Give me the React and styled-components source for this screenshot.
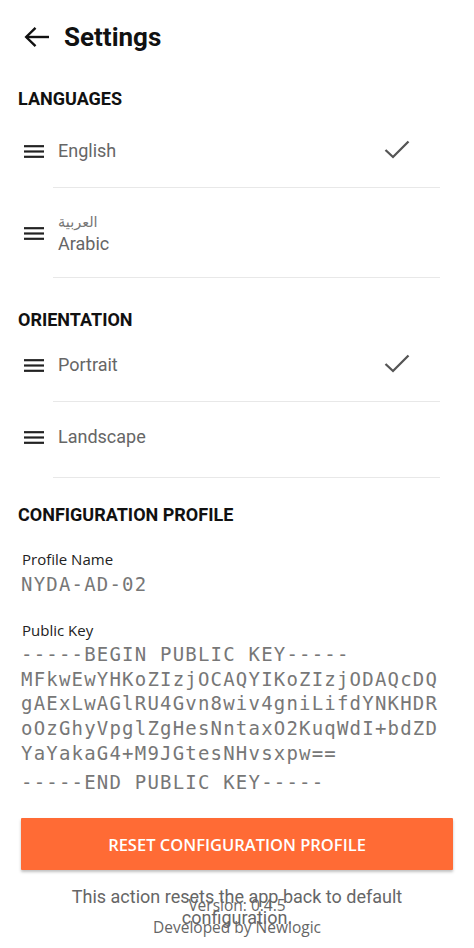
import React from "react";
import styled, { createGlobalStyle } from "styled-components";

const Global = createGlobalStyle`
  html, body { margin: 0; padding: 0; background: #fff; }
  body { font-family: Roboto, "Noto Sans", sans-serif; }
`;

const Page = styled.div`
  position: relative;
  width: 474px;
  height: 948px;
  overflow: hidden;
  background: #fff;
`;

const Header = styled.header`
  height: 74px;
  display: flex;
  align-items: center;
  gap: 13px;
  padding-left: 23px;
  box-sizing: border-box;
`;

const BackButton = styled.button`
  width: 28px;
  height: 28px;
  padding: 0;
  border: 0;
  background: none;
  display: flex;
  align-items: center;
  justify-content: center;
`;

const Title = styled.h1`
  margin: 0;
  font-family: Roboto, sans-serif;
  font-weight: 700;
  font-size: 26px;
  color: #111;
  line-height: 30px;
`;

const SectionTitle = styled.h2`
  margin: ${(p) => p.$top}px 0 0 18px;
  height: 20px;
  font-family: Roboto, sans-serif;
  font-weight: 700;
  font-size: 18px;
  line-height: 20px;
  color: #111;
`;

const List = styled.ul`
  margin: 0;
  padding: 0;
  list-style: none;
`;

const Row = styled.li`
  display: flex;
  height: ${(p) => p.$height}px;
`;

const Handle = styled.div`
  width: 53px;
  flex: none;
  display: flex;
  justify-content: flex-start;
  align-items: ${(p) => (p.$center ? "center" : "flex-start")};
  padding-left: 24px;
  padding-top: ${(p) => (p.$center ? 0 : p.$top - 6)}px;
  box-sizing: border-box;
`;

const RowBody = styled.div`
  flex: none;
  width: 387px;
  display: flex;
  align-items: ${(p) => (p.$center ? "center" : "flex-start")};
  padding-top: ${(p) => (p.$center ? 0 : p.$top - 11)}px;
  padding-left: 5px;
  padding-right: 30px;
  box-sizing: border-box;
  border-bottom: 1px solid #e8e8e8;
`;

const Labels = styled.div`
  flex: 1;
  display: flex;
  flex-direction: column;
`;

const Native = styled.span`
  align-self: flex-start;
  font-family: "DejaVu Sans", "Noto Sans", sans-serif;
  font-size: 14.5px;
  line-height: 22px;
  color: #777;
`;

const ItemText = styled.span`
  font-family: Roboto, sans-serif;
  font-size: 18px;
  line-height: 22px;
  color: #666;
`;

const Field = styled.div`
  margin: ${(p) => p.$top}px 0 0 22px;
  display: flex;
  flex-direction: column;
`;

const FieldLabel = styled.div`
  font-family: "Open Sans", sans-serif;
  font-size: 15px;
  line-height: 22px;
  color: #222;
`;

const Mono = styled.div`
  font-family: "DejaVu Sans Mono", "Liberation Mono", monospace;
  font-size: 19px;
  letter-spacing: 1.2px;
  color: #777;
  line-height: ${(p) => p.$lh || 24.7}px;
  margin-left: -1px;
  margin-top: ${(p) => p.$top || 0}px;
  white-space: pre;
`;

const ResetButton = styled.button`
  display: block;
  margin: ${(p) => p.$top}px 0 0 21px;
  width: 432px;
  height: 52px;
  border: 0;
  border-radius: 1px;
  background: #ff6b35;
  box-shadow: 0 2px 3px rgba(0, 0, 0, 0.25);
  font-family: "Open Sans", sans-serif;
  font-weight: 600;
  font-size: 16.5px;
  color: #fff;
  letter-spacing: 0;
`;

const Note = styled.p`
  margin: 16px auto 0;
  width: 360px;
  text-align: center;
  font-family: Roboto, sans-serif;
  font-size: 18px;
  line-height: 21px;
  color: #666;
`;

const Footer = styled.footer`
  position: absolute;
  left: 0;
  right: 0;
  bottom: 10px;
  text-align: center;
  font-family: "Open Sans", sans-serif;
  font-size: 15.5px;
  line-height: 22px;
  color: #666;
`;

const MenuIcon = () => (
  <svg width="20" height="13" viewBox="0 0 20 13">
    <g stroke="#222" strokeWidth="2.2">
      <line x1="0" y1="1.2" x2="20" y2="1.2" />
      <line x1="0" y1="6.5" x2="20" y2="6.5" />
      <line x1="0" y1="11.8" x2="20" y2="11.8" />
    </g>
  </svg>
);

const CheckIcon = () => (
  <svg width="26" height="20" viewBox="0 0 26 20">
    <polyline
      points="1.5,10 9,17 24.5,1.5"
      fill="none"
      stroke="#555"
      strokeWidth="2.3"
    />
  </svg>
);

const ArrowIcon = () => (
  <svg width="26" height="22" viewBox="0 0 26 22">
    <g fill="none" stroke="#111" strokeWidth="2.4">
      <line x1="2" y1="11" x2="25" y2="11" />
      <polyline points="11.5,1.8 2.2,11 11.5,20.2" />
    </g>
  </svg>
);

const Item = ({ height, top, center, native, label, checked }) => (
  <Row $height={height}>
    <Handle $top={top} $center={center}>
      <MenuIcon />
    </Handle>
    <RowBody $top={top} $center={center}>
      <Labels>
        {native && <Native dir="rtl">{native}</Native>}
        <ItemText>{label}</ItemText>
      </Labels>
      {checked && <CheckIcon />}
    </RowBody>
  </Row>
);

export default function App() {
  return (
    <Page>
      <Global />
      <Header>
        <BackButton aria-label="Back">
          <ArrowIcon />
        </BackButton>
        <Title>Settings</Title>
      </Header>

      <SectionTitle $top={15}>LANGUAGES</SectionTitle>
      <List>
        <Item height={79} top={42} label="English" checked />
        <Item height={90} center native="العربية" label="Arabic" />
      </List>

      <SectionTitle $top={32}>ORIENTATION</SectionTitle>
      <List>
        <Item height={72} top={35} label="Portrait" checked />
        <Item height={76} top={35} label="Landscape" />
      </List>

      <SectionTitle $top={27}>CONFIGURATION PROFILE</SectionTitle>
      <Field $top={23}>
        <FieldLabel>Profile Name</FieldLabel>
        <Mono $lh={28}>NYDA-AD-02</Mono>
      </Field>
      <Field $top={21}>
        <FieldLabel>Public Key</FieldLabel>
        <Mono $top={1}>
          {"-----BEGIN PUBLIC KEY-----\nMFkwEwYHKoZIzjOCAQYIKoZIzjODAQcDQ\ngAExLwAGlRU4Gvn8wiv4gniLifdYNKHDR\noOzGhyVpglZgHesNntaxO2KuqWdI+bdZD\nYaYakaG4+M9JGtesNHvsxpw=="}
        </Mono>
        <Mono $top={4}>-----END PUBLIC KEY-----</Mono>
      </Field>

      <ResetButton $top={24}>RESET CONFIGURATION PROFILE</ResetButton>
      <Note>This action resets the app back to default configuration.</Note>

      <Footer>
        <div>Version: 0.4.5</div>
        <div>Developed by Newlogic</div>
      </Footer>
    </Page>
  );
}
